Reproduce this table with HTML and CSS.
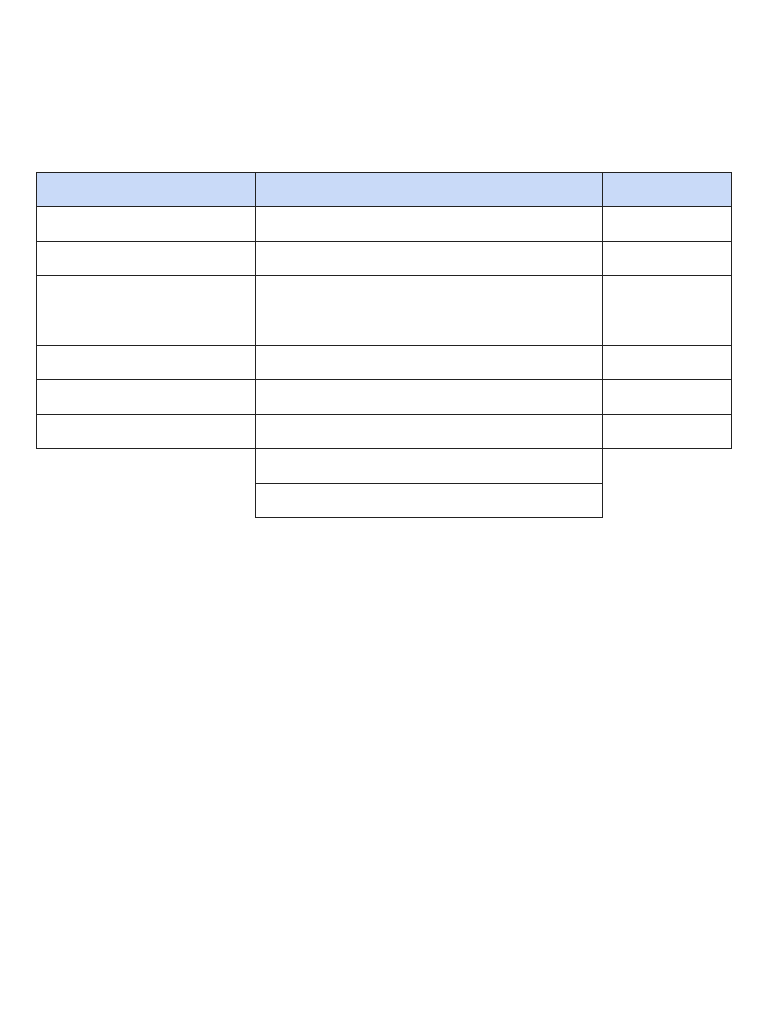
FILE: index.html
```html
<!DOCTYPE html>
<html lang="en">
<head>
<meta charset="utf-8">
<title>Table</title>
<link rel="stylesheet" href="styles.css">
</head>
<body>
<table class="sheet">
  <colgroup>
    <col class="c1">
    <col class="c2">
    <col class="c3">
  </colgroup>
  <thead>
    <tr class="row head-row">
      <th class="cell head"></th>
      <th class="cell head"></th>
      <th class="cell head"></th>
    </tr>
  </thead>
  <tbody>
    <tr class="row"><td class="cell"></td><td class="cell"></td><td class="cell"></td></tr>
    <tr class="row short"><td class="cell"></td><td class="cell"></td><td class="cell"></td></tr>
    <tr class="row tall"><td class="cell"></td><td class="cell"></td><td class="cell"></td></tr>
    <tr class="row"><td class="cell"></td><td class="cell"></td><td class="cell"></td></tr>
    <tr class="row"><td class="cell"></td><td class="cell"></td><td class="cell"></td></tr>
    <tr class="row"><td class="cell"></td><td class="cell"></td><td class="cell"></td></tr>
    <tr class="row"><td class="blank"></td><td class="cell"></td><td class="blank"></td></tr>
    <tr class="row"><td class="blank"></td><td class="cell"></td><td class="blank"></td></tr>
  </tbody>
</table>
</body>
</html>
```

FILE: styles.css
```css
html, body {
  margin: 0;
  padding: 0;
  background: #ffffff;
  font-family: "Liberation Sans", Arial, sans-serif;
  font-size: 13px;
}

.sheet {
  border-collapse: collapse;
  table-layout: fixed;
  margin: 172px 0 0 36px;
  width: 695px;
}

.c1 { width: 219px; }
.c2 { width: 347px; }
.c3 { width: 129px; }

.row {
  height: 34.5px;
}

.row.head-row {
  height: 34px;
}

.row.short {
  height: 34px;
}

.row.tall {
  height: 70px;
}

.cell {
  border: 1px solid #222222;
  padding: 0;
}

.head {
  background: #c9daf8;
}

.blank {
  border: none;
  padding: 0;
}
```
